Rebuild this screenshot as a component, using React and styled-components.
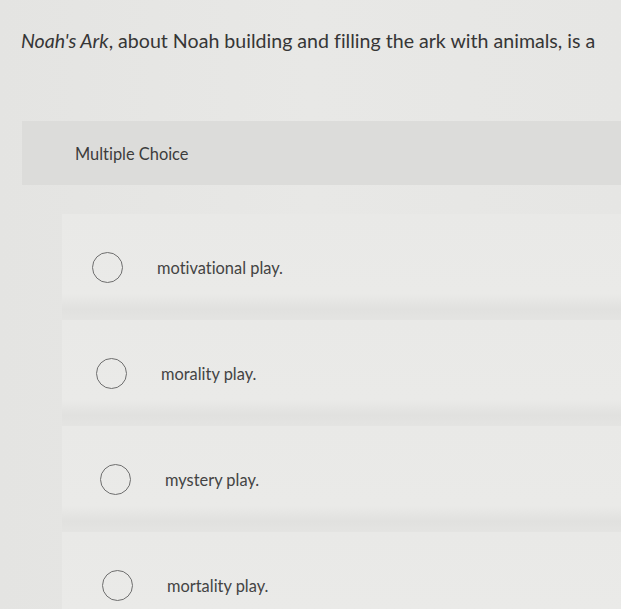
import React from "react";
import styled, { createGlobalStyle } from "styled-components";

const Global = createGlobalStyle`
  html, body { margin: 0; padding: 0; }
  body {
    background: #e6e6e4;
    font-family: Lato, "Open Sans", "Liberation Sans", sans-serif;
    font-variant-ligatures: none;
    width: 621px;
    height: 609px;
    overflow: hidden;
  }
`;

const Page = styled.div`
  display: flex;
  flex-direction: column;
  background: linear-gradient(90deg, #e4e4e2 0%, #e8e8e6 50%, #e6e6e4 100%);
  height: 609px;
  overflow: hidden;
  & > * { flex: none; }
`;

const Question = styled.p`
  margin: 0;
  padding: 29px 0 0 21px;
  font-size: 19.6px;
  line-height: 24px;
  color: #363636;
  white-space: nowrap;
  em { font-style: italic; }
`;

const Header = styled.div`
  margin: 68px 0 0 22px;
  height: 64px;
  display: flex;
  align-items: center;
  padding-left: 53px;
  background: #dcdcda;
  font-size: 16.4px;
  color: #3c3c3c;
`;

const Options = styled.div`
  margin: 29px 0 0 62px;
  display: flex;
  flex-direction: column;
`;

const Option = styled.label`
  height: 106px;
  flex: none;
  display: flex;
  align-items: center;
  gap: 34px;
  padding-left: ${(p) => 30 + p.$shift}px;
  background: linear-gradient(180deg, #e9e9e7 0%, #eaeae8 75%, #e1e1df 90%, #e4e4e2 100%);
  font-size: 16.4px;
  color: #434343;
  cursor: pointer;
`;

const Radio = styled.span`
  width: 31px;
  height: 31px;
  border-radius: 50%;
  border: 1.5px solid #6e6e6e;
  box-sizing: border-box;
  flex: none;
`;

const choices = [
  { text: "motivational play.", shift: 0 },
  { text: "morality play.", shift: 4 },
  { text: "mystery play.", shift: 8 },
  { text: "mortality play.", shift: 10 },
];

export default function App() {
  return (
    <>
      <Global />
      <Page>
        <Question>
          <em>Noah's Ark</em>, about Noah building and filling the ark with animals, is a
        </Question>
        <Header>Multiple Choice</Header>
        <Options>
          {choices.map((c) => (
            <Option key={c.text} $shift={c.shift}>
              <Radio />
              <span>{c.text}</span>
            </Option>
          ))}
        </Options>
      </Page>
    </>
  );
}
